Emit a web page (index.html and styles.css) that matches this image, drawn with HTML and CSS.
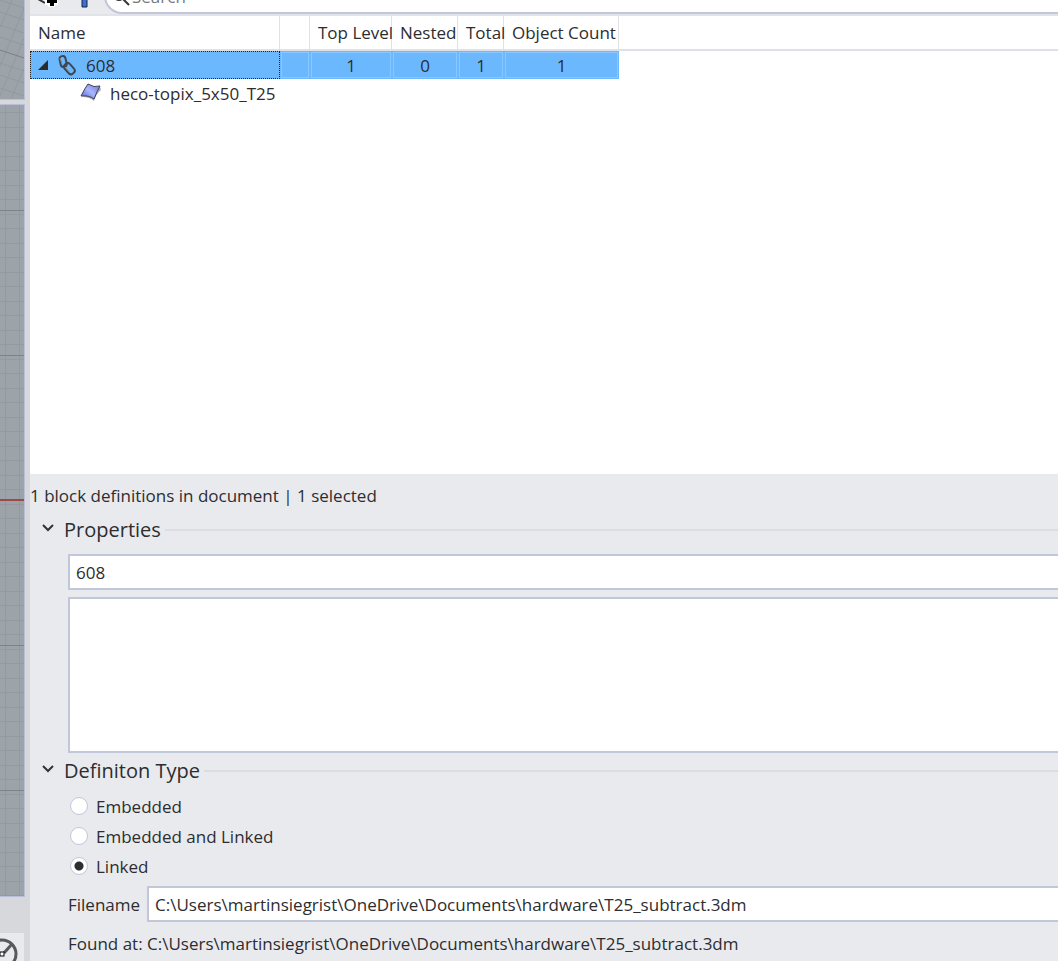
FILE: index.html
```html
<!DOCTYPE html>
<html lang="en">
<head>
    <meta charset="UTF-8">
    <meta name="viewport" content="width=device-width, initial-scale=1.0">
    <title>Block Definitions</title>
    <link rel="stylesheet" href="styles.css">
</head>
<body>
    <aside class="viewports">
        <div class="view perspective">
            <svg width="24" height="99">
                <g stroke="#929a9f" fill="none">
                    <path d="M0 0L24 8M0 12L24 20M0 25L24 33M0 37L24 45M0 63L24 71M0 75L24 83M0 88L24 96"/>
                    <path d="M12 0L0 28M24 8L0 66M24 38L0 96M24 68L11 99"/>
                </g>
                <path d="M0 50L24 58" stroke="#857d84"/>
            </svg>
        </div>
        <div class="view top">
            <svg width="24" height="100%">
                <defs>
                    <pattern id="grid" y="105" width="24" height="29" patternUnits="userSpaceOnUse">
                        <path d="M0 4.5H24M0 18.5H24M5.5 0V29M19.5 0V29" stroke="#939ba1"/>
                    </pattern>
                </defs>
                <rect width="24" height="100%" fill="url(#grid)"/>
                <path d="M0 105.5H24M0 250.5H24M0 540.5H24M0 685.5H24" stroke="#7e8289"/>
                <path d="M0 395H24" stroke="#9c4a49" stroke-width="2"/>
            </svg>
        </div>
        <div class="osnap">
            <svg width="24" height="28">
                <circle cx="2" cy="21" r="14" fill="none" stroke="#58595b" stroke-width="3"/>
                <path d="M4 20L12 11" stroke="#58595b" stroke-width="3"/>
                <rect x="0" y="19" width="4" height="4" fill="#fff" stroke="#000"/>
            </svg>
        </div>
    </aside>

    <main class="panel">
        <div class="toolbar">
            <button class="tool" aria-label="Add block">
                <svg width="24" height="16">
                    <path d="M8 1L15 5" stroke="#333" stroke-width="2"/>
                    <path d="M16 0h12v7h-3v2h-7v-2h-3v-5z" fill="#fff"/>
                    <path d="M22 0V8M17 3H27" stroke="#000" stroke-width="4"/>
                </svg>
            </button>
            <button class="tool" aria-label="Insert block">
                <svg width="12" height="16">
                    <path d="M6 0V9H11V0" fill="#3d6fd0" stroke="#17254a"/>
                </svg>
            </button>
            <div class="search">
                <svg width="20" height="24">
                    <circle cx="9" cy="11" r="5" fill="none" stroke="#333" stroke-width="2"/>
                    <path d="M12 14L19 21" stroke="#333" stroke-width="2"/>
                </svg>
                <input type="text" placeholder="Search" aria-label="Search">
            </div>
        </div>

        <div class="tree">
            <table>
                <colgroup>
                    <col class="col-name">
                    <col class="col-icon">
                    <col class="col-top">
                    <col class="col-nested">
                    <col class="col-total">
                    <col class="col-count">
                    <col>
                </colgroup>
                <thead>
                    <tr>
                        <th>Name</th>
                        <th></th>
                        <th>Top Level</th>
                        <th>Nested</th>
                        <th>Total</th>
                        <th>Object Count</th>
                        <th></th>
                    </tr>
                </thead>
                <tbody>
                    <tr class="selected">
                        <td class="name">
                            <div class="item">
                                <svg width="10" height="10"><path d="M10 0V10H0z" fill="#2b2b2b"/></svg>
                                <svg class="link-icon" width="18" height="22" fill="none">
                                    <g stroke="#3f4850" stroke-width="2">
                                        <rect x="2" y="2" width="6" height="11" rx="3" transform="rotate(-12 5 7)"/>
                                        <rect x="8" y="9" width="7" height="12" rx="3" transform="rotate(-42 11 15)"/>
                                    </g>
                                    <path d="M2 4L4 10M7 13L12 19" stroke="#7d858c"/>
                                </svg>
                                <span>608</span>
                            </div>
                        </td>
                        <td></td>
                        <td>1</td>
                        <td>0</td>
                        <td>1</td>
                        <td>1</td>
                        <td class="rest"></td>
                    </tr>
                    <tr>
                        <td class="name">
                            <div class="item child">
                                <svg width="22" height="20">
                                    <defs>
                                        <linearGradient id="surface" x1="0" y1="1" x2="1" y2="0">
                                            <stop offset="0" stop-color="#5463cf"/>
                                            <stop offset="0.5" stop-color="#a9b6ff"/>
                                            <stop offset="1" stop-color="#6575e0"/>
                                        </linearGradient>
                                    </defs>
                                    <path d="M2 14Q10 14 14 18Q16 11 21 7L20 4z" fill="#aaa"/>
                                    <path d="M8 1Q14 5 20 3Q17 8 14 16Q9 12 1 13Q5 5 8 1z" fill="url(#surface)" stroke="#3c3f58"/>
                                </svg>
                                <span>heco-topix_5x50_T25</span>
                            </div>
                        </td>
                        <td></td>
                        <td></td>
                        <td></td>
                        <td></td>
                        <td></td>
                        <td></td>
                    </tr>
                </tbody>
            </table>
        </div>

        <p class="status">1 block definitions in document | 1 selected</p>

        <section>
            <h2>
                <button aria-label="Collapse Properties">
                    <svg width="12" height="8"><path d="M1 1L6 6L11 1" fill="none" stroke="#333" stroke-width="2"/></svg>
                </button>
                Properties
            </h2>
            <div class="content properties">
                <input class="field" type="text" value="608" aria-label="Block name">
                <textarea class="field" aria-label="Description"></textarea>
            </div>
        </section>

        <section>
            <h2>
                <button aria-label="Collapse Definiton Type">
                    <svg width="12" height="8"><path d="M1 1L6 6L11 1" fill="none" stroke="#333" stroke-width="2"/></svg>
                </button>
                Definiton Type
            </h2>
            <div class="content definition">
                <label class="option"><input type="radio" name="type">Embedded</label>
                <label class="option"><input type="radio" name="type">Embedded and Linked</label>
                <label class="option"><input type="radio" name="type" checked>Linked</label>
                <div class="file">
                    <label for="filename">Filename</label>
                    <input class="field" type="text" id="filename" value="C:\Users\martinsiegrist\OneDrive\Documents\hardware\T25_subtract.3dm">
                </div>
                <p class="found">Found at: C:\Users\martinsiegrist\OneDrive\Documents\hardware\T25_subtract.3dm</p>
            </div>
        </section>
    </main>
</body>
</html>
```
FILE: styles.css
```css
* {
    box-sizing: border-box;
}

body {
    display: flex;
    margin: 0;
    height: 100vh;
    overflow: hidden;
    background-color: #d7d8dc;
    color: #2d2d30;
    font-family: "Segoe UI", "Open Sans", sans-serif;
    font-size: 17px;
}

button {
    padding: 0;
    border: 0;
    background: none;
}

input, textarea {
    color: inherit;
    font: inherit;
}

svg {
    display: block;
    flex: none;
}

/* Viewports on the left */
.viewports {
    display: flex;
    flex-direction: column;
    flex: none;
    width: 30px;
}

.view {
    width: 25px;
    overflow: hidden;
    border-right: 1px solid #b9bfd8;
    background-color: #9ca3a9;
}

.perspective {
    flex: none;
    height: 100px;
    border-bottom: 1px solid #b9bfd8;
}

.top {
    flex: 1;
    margin: 4px 0 36px;
    border-top: 1px solid #b9bfd8;
    border-bottom: 1px solid #b9bfd8;
}

.osnap {
    flex: none;
    width: 24px;
    background-color: #e9eaee;
}

/* Block panel */
.panel {
    display: flex;
    flex-direction: column;
    flex: 1;
    min-width: 0;
    background-color: #e9eaee;
}

.toolbar {
    display: flex;
    align-items: flex-end;
    flex: none;
    height: 16px;
    overflow: hidden;
    border-bottom: 2px solid #e1e3e9;
}

.tool {
    margin-right: 22px;
}

.tool svg {
    overflow: visible;
}

.tool + .tool {
    margin-right: 16px;
}

.search {
    display: flex;
    align-items: center;
    flex: 1;
    height: 36px;
    padding-left: 4px;
    border: 2px solid #c0c7da;
    border-right: 0;
    border-radius: 18px 0 0 18px;
    background-color: #fff;
}

.search input {
    flex: 1;
    height: 32px;
    padding: 0 2px;
    border: 0;
    background: none;
}

.search input::placeholder {
    color: #77787c;
}

.tree {
    flex: 1;
    min-height: 0;
    background-color: #fff;
}

table {
    width: 100%;
    table-layout: fixed;
    border-collapse: separate;
    border-spacing: 0;
}

.col-name { width: 250px; }
.col-icon { width: 30px; }
.col-top { width: 82px; }
.col-nested { width: 66px; }
.col-total { width: 46px; }
.col-count { width: 115px; }

th {
    height: 35px;
    padding: 0 0 0 8px;
    border-right: 1px solid #dfe1e7;
    border-bottom: 2px solid #dee1e7;
    font-weight: normal;
    text-align: left;
    white-space: nowrap;
}

th:last-child {
    border-right: 0;
}

td {
    height: 28px;
    padding: 0;
    text-align: center;
}

.selected td {
    border: 1px solid #6bb8ff;
    background-color: #6bb8ff;
    box-shadow: inset 0 0 0 1px #8bc7ff;
}

.selected .name {
    border: 1px dotted #222;
    box-shadow: none;
}

.selected .rest {
    border: 0;
    background: none;
    box-shadow: none;
}

.item {
    display: flex;
    align-items: center;
    height: 26px;
    padding-left: 7px;
}

.link-icon {
    margin: 0 10px;
}

.child {
    height: 28px;
    gap: 8px;
    padding-left: 50px;
}

.status {
    margin: 0;
    line-height: 44px;
}

/* Sections */
h2 {
    display: flex;
    align-items: center;
    margin: 0;
    font-size: 20px;
    font-weight: normal;
    line-height: 24px;
}

h2 button {
    margin: 0 10px 4px 12px;
}

h2::after {
    content: "";
    flex: 1;
    height: 2px;
    margin-left: 4px;
    background-color: #dcdde1;
}

.content {
    display: flex;
    flex-direction: column;
    padding-left: 38px;
}

.properties {
    gap: 7px;
    padding-top: 12px;
    padding-bottom: 6px;
}

.definition {
    padding-top: 8px;
}

.field {
    height: 36px;
    padding: 0 6px;
    border: 2px solid #c0c7da;
    border-right: 0;
    border-radius: 0;
    background-color: #fff;
}

textarea.field {
    height: 156px;
    resize: none;
}

.option {
    display: flex;
    align-items: center;
    gap: 8px;
    height: 30px;
}

.option input {
    appearance: none;
    width: 18px;
    height: 18px;
    margin: 0 0 0 2px;
    border: 1px solid #c0c7da;
    border-radius: 50%;
    background-color: #fff;
}

.option input:checked {
    background-image: radial-gradient(circle, #2d2d30 4px, transparent 5px);
}

.file {
    display: flex;
    align-items: center;
    gap: 7px;
    padding-top: 5px;
}

.file .field {
    flex: 1;
    min-width: 0;
}

.found {
    margin: 5px 0 0;
    line-height: 34px;
    white-space: nowrap;
}
```
